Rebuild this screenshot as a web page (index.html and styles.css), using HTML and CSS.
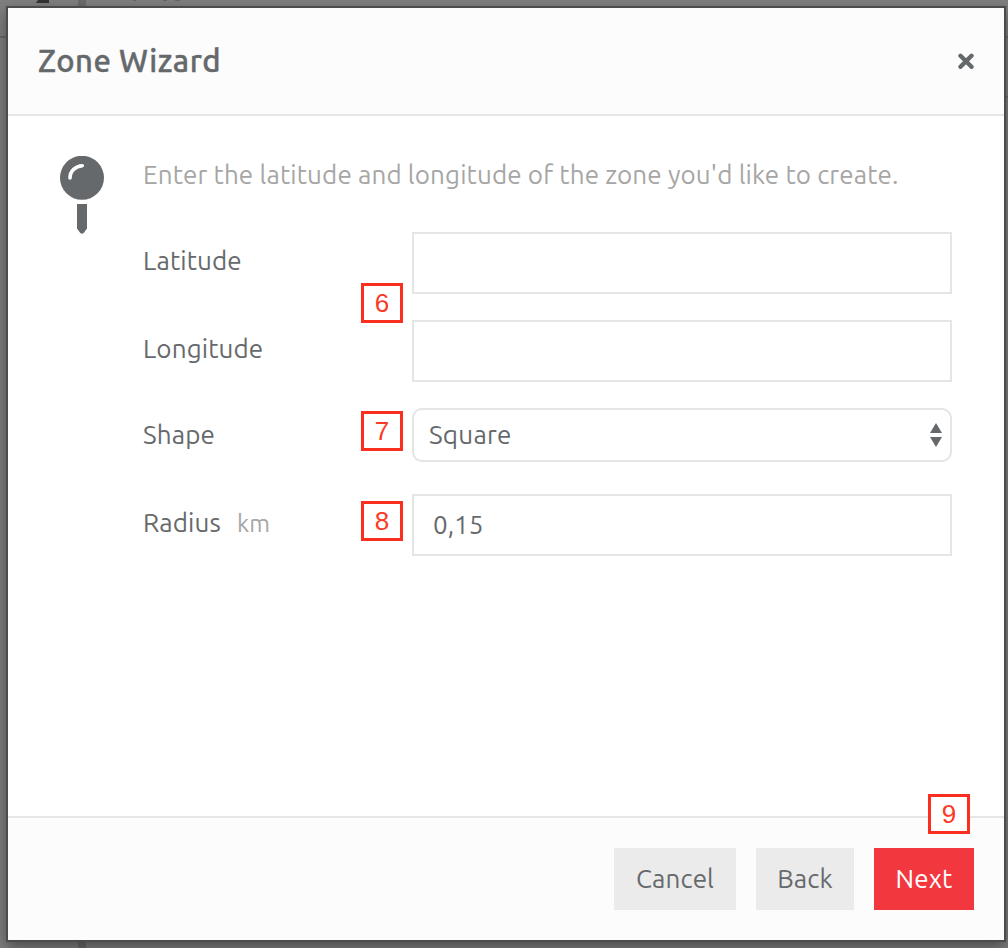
FILE: index.html
```html
<!DOCTYPE html>
<html lang="en">
<head>
    <meta charset="UTF-8">
    <meta name="viewport" content="width=device-width, initial-scale=1.0">
    <title>Zone Wizard</title>
    <link rel="stylesheet" href="styles.css">
</head>
<body>
    <!-- page behind the dialog -->
    <div class="backdrop">
        <svg width="1008" height="948" viewBox="0 0 1008 948">
            <path d="M78 0h8v948h-8z" fill="#6b6b6b"/>
            <path d="M0 36h8v2H0zM1004 36h4v2h-4zM1004 96h4v2h-4z" fill="#6a6a6a"/>
            <path d="M38 0h11v3H36z" fill="#333"/>
            <path d="M133 0h3v1h-3zM163 0h4v1h-4zM175 0h5v1h-5z" fill="#666"/>
        </svg>
    </div>

    <div class="modal">
        <div class="modal-header">
            <h2 class="modal-title">Zone Wizard</h2>
            <button class="close" aria-label="Close">
                <svg width="16" height="16" viewBox="0 0 16 16">
                    <path d="M2.5 2.8l11 11M13.5 2.8l-11 11" stroke="#66696b" stroke-width="4.4" stroke-linecap="round"/>
                </svg>
            </button>
        </div>

        <div class="modal-body">
            <svg class="pin" width="44" height="80" viewBox="0 0 44 80">
                <circle cx="22" cy="21.8" r="22" fill="#66696b"/>
                <path d="M10 22C10 15 15.5 10 22.3 9.7" fill="none" stroke="#fff" stroke-width="3.6" stroke-linecap="round"/>
                <path d="M17 48h10v24.5l-3.3 4.500q-1.700 1.500-3.400 0L17 72.500z" fill="#66696b"/>
            </svg>
            <form class="zone-form">
                <p class="intro">Enter the latitude and longitude of the zone you'd like to create.</p>
                <div class="row">
                    <label class="label" for="latitude">Latitude</label>
                    <input class="field" id="latitude" type="text">
                    <span class="step step-position">6</span>
                </div>
                <div class="row">
                    <label class="label" for="longitude">Longitude</label>
                    <input class="field" id="longitude" type="text">
                </div>
                <div class="row row-shape">
                    <label class="label label-shape" for="shape">Shape</label>
                    <div class="select">
                        <select class="select-field" id="shape">
                            <option>Square</option>
                        </select>
                        <svg class="arrows" width="12" height="24" viewBox="0 0 12 24">
                            <path d="M6 0l6 10H0zM0 14h12L6 24z" fill="#66696b"/>
                        </svg>
                    </div>
                    <span class="step step-shape">7</span>
                </div>
                <div class="row">
                    <label class="label" for="radius">Radius <span class="unit">km</span></label>
                    <input class="field" id="radius" type="text" value="0,15">
                    <span class="step step-radius">8</span>
                </div>
            </form>
        </div>

        <div class="modal-footer">
            <button class="btn btn-cancel">Cancel</button>
            <button class="btn btn-back">Back</button>
            <button class="btn btn-next">Next</button>
            <span class="step step-next">9</span>
        </div>
    </div>
</body>
</html>
```

FILE: styles.css
```css
* {
    box-sizing: border-box;
}
body {
    margin: 0;
    padding: 6px 2px 6px 6px;
    height: 948px;
    overflow: hidden;
    background: #7f7f7f;
    color: #66696b;
    font-family: Ubuntu, "Noto Sans", sans-serif;
    font-size: 26px;
    letter-spacing: 0.13px;
}
.backdrop {
    position: absolute;
    top: 0;
    left: 0;
    height: 948px;
}
.modal {
    position: relative;
    width: 1000px;
    height: 936px;
    display: flex;
    flex-direction: column;
    border: 2px solid #4c4c4c;
    background: #fff;
    box-shadow: 0 6px 14px rgba(0, 0, 0, 0.4);
}
.modal-header {
    display: flex;
    align-items: center;
    justify-content: space-between;
    height: 108px;
    padding: 0 30px;
    border-bottom: 2px solid #e6e6e6;
    background: #fcfcfc;
}
.modal-title {
    margin: 0;
    padding-bottom: 2px;
    font-size: 31px;
    font-weight: 500;
    letter-spacing: 0.5px;
    -webkit-text-stroke: 0.4px #66696b;
}
.close {
    display: flex;
    padding: 0;
    border: 0;
    background: none;
}
.modal-body {
    flex: 1;
    display: flex;
    align-items: flex-start;
    gap: 39px;
    padding: 40px 52px 0;
}
.pin {
    flex: none;
}
.zone-form {
    flex: 1;
}
.intro {
    margin: 0;
    height: 76px;
    line-height: 38px;
    color: #a6a6a6;
    white-space: nowrap;
}
.row {
    position: relative;
    display: flex;
    justify-content: space-between;
    margin-bottom: 26px;
}
.row-shape {
    margin-bottom: 32px;
}
.label {
    line-height: 58px;
}
.label-shape {
    line-height: 54px;
}
.unit {
    margin-left: 10px;
    font-size: 24px;
    color: #a6a6a6;
}
.field {
    width: 540px;
    height: 62px;
    padding: 0 19px 2px;
    border: 2px solid #e5e5e5;
    background: #fff;
    color: inherit;
    font: inherit;
}
.select {
    position: relative;
    width: 540px;
    height: 54px;
}
.select-field {
    appearance: none;
    width: 100%;
    height: 100%;
    padding: 0 15px 2px;
    border: 2px solid #e5e5e5;
    border-radius: 10px;
    background: #fff;
    color: inherit;
    font: inherit;
    letter-spacing: 0.25px;
}
.arrows {
    position: absolute;
    top: 15px;
    right: 10px;
}
.step {
    position: absolute;
    width: 42px;
    height: 40px;
    border: 3px solid #fa2f20;
    background: #fff;
    color: #fa3a24;
    font-family: "Liberation Sans", Arial, sans-serif;
    font-size: 26px;
    line-height: 35px;
    letter-spacing: 0;
    text-align: center;
}
.step-position {
    top: 51px;
    left: 218px;
}
.step-shape {
    top: 3px;
    left: 218px;
}
.step-radius {
    top: 7px;
    left: 218px;
}
.modal-footer {
    position: relative;
    display: flex;
    justify-content: flex-end;
    gap: 20px;
    height: 124px;
    padding: 30px 30px 0;
    border-top: 2px solid #e6e6e6;
    background: #fcfcfc;
}
.btn {
    height: 62px;
    padding: 0 0 2px;
    border: 0;
    background: #ebebeb;
    color: inherit;
    font: inherit;
    letter-spacing: inherit;
}
.btn-cancel {
    width: 122px;
}
.btn-back {
    width: 98px;
}
.btn-next {
    width: 100px;
    background: #f2383e;
    color: #fff;
}
.step-next {
    top: -24px;
    right: 34px;
}
```
